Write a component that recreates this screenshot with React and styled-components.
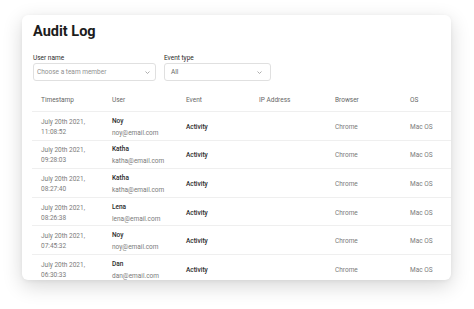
import React from "react";
import styled, { createGlobalStyle } from "styled-components";

const GlobalStyle = createGlobalStyle`
  html, body {
    margin: 0;
    background: #ffffff;
  }
  body {
    font-family: Roboto, "Liberation Sans", sans-serif;
    -webkit-font-smoothing: antialiased;
  }
`;

const Page = styled.div`
  width: 474px;
  height: 309px;
  box-sizing: border-box;
  padding: 15px 23px 0 22px;
  overflow: hidden;
`;

const Card = styled.div`
  height: 265px;
  background: #fff;
  border-radius: 6px;
  box-shadow: 0 6px 20px rgba(0, 0, 0, 0.16), 0 1px 4px rgba(0, 0, 0, 0.05);
  overflow: hidden;
  display: flex;
  flex-direction: column;
  padding: 8px 0 0 11px;
  box-sizing: border-box;
`;

const Title = styled.h1`
  margin: 0;
  font-size: 14.5px;
  line-height: 18px;
  font-weight: 700;
  color: #1c1c1c;
`;

const Filters = styled.div`
  display: flex;
  gap: 8px;
  margin-top: 13px;
`;

const Field = styled.div`
  display: flex;
  flex-direction: column;
  gap: 1px;
`;

const Label = styled.label`
  font-size: 6.5px;
  line-height: 8px;
  color: #2a2a2a;
`;

const Select = styled.div`
  width: ${(p) => p.$width}px;
  height: 18px;
  box-sizing: border-box;
  border: 1px solid #e0e0e0;
  border-radius: 3px;
  display: flex;
  align-items: center;
  justify-content: space-between;
  padding: 0 ${(p) => p.$right}px 0 ${(p) => p.$left}px;
  font-size: 6.5px;
  color: ${(p) => (p.$placeholder ? "#8f8f8f" : "#666")};
`;

const Chevron = () => (
  <svg width="5" height="3" viewBox="0 0 5 3">
    <path d="M0.5 0.5 L2.5 2.5 L4.5 0.5" fill="none" stroke="#999" strokeWidth="0.8" />
  </svg>
);

const Table = styled.div`
  margin-top: 7px;
  margin-left: -1px;
  width: 460px;
`;

const Row = styled.div`
  display: grid;
  grid-template-columns: 71px 74px 73px 76px 75px 1fr;
  align-items: center;
  height: ${(p) => (p.$head ? "24px" : "28.6px")};
  box-sizing: border-box;
  border-bottom: 1px solid #efefef;
  padding-top: ${(p) => (p.$head ? "0" : "2px")};
`;

const Cell = styled.div`
  padding-left: 9px;
  font-size: 6.5px;
  line-height: 10px;
  color: ${(p) => (p.$strong ? "#2a2a2a" : "#7a7a7a")};
  font-weight: ${(p) => (p.$strong ? 500 : 400)};
  white-space: nowrap;
`;

const HeadCell = styled(Cell)`
  color: #666;
`;

const Name = styled.div`
  color: #2a2a2a;
  font-weight: 500;
`;

const Email = styled.div`
  margin-top: 2px;
  color: #7a7a7a;
`;

const rows = [
  { time: "11:08:52", name: "Noy", email: "noy@email.com" },
  { time: "09:28:03", name: "Katha", email: "katha@email.com" },
  { time: "08:27:40", name: "Katha", email: "katha@email.com" },
  { time: "08:26:38", name: "Lena", email: "lena@email.com" },
  { time: "07:45:32", name: "Noy", email: "noy@email.com" },
  { time: "06:30:33", name: "Dan", email: "dan@email.com" },
];

export default function App() {
  return (
    <>
      <GlobalStyle />
      <Page>
        <Card>
          <Title>Audit Log</Title>
          <Filters>
            <Field>
              <Label>User name</Label>
              <Select $width={123} $left={3} $right={5} $placeholder>
                Choose a team member
                <Chevron />
              </Select>
            </Field>
            <Field>
              <Label>Event type</Label>
              <Select $width={107} $left={6} $right={8}>
                All
                <Chevron />
              </Select>
            </Field>
          </Filters>
          <Table>
            <Row $head>
              <HeadCell>Timestamp</HeadCell>
              <HeadCell>User</HeadCell>
              <HeadCell>Event</HeadCell>
              <HeadCell>IP Address</HeadCell>
              <HeadCell>Browser</HeadCell>
              <HeadCell>OS</HeadCell>
            </Row>
            {rows.map((r, i) => (
              <Row key={i}>
                <Cell>
                  July 20th 2021,
                  <br />
                  {r.time}
                </Cell>
                <Cell>
                  <Name>{r.name}</Name>
                  <Email>{r.email}</Email>
                </Cell>
                <Cell $strong>Activity</Cell>
                <Cell></Cell>
                <Cell>Chrome</Cell>
                <Cell>Mac OS</Cell>
              </Row>
            ))}
          </Table>
        </Card>
      </Page>
    </>
  );
}
